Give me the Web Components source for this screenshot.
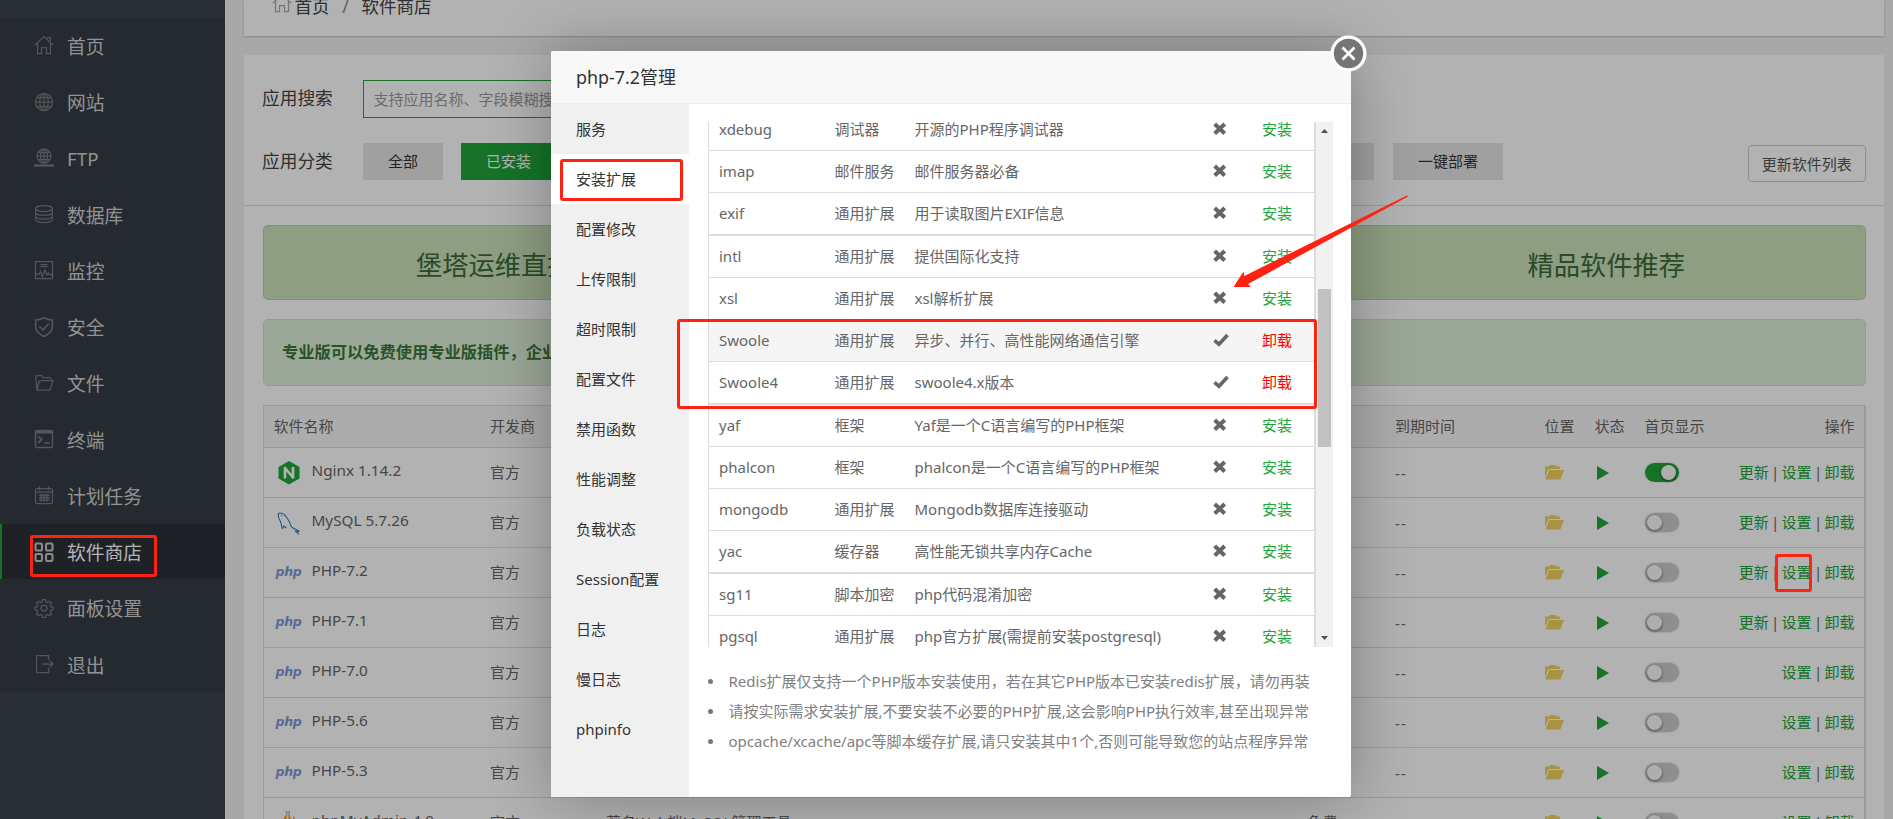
<!DOCTYPE html>
<html lang="zh-CN">
<head>
<meta charset="utf-8">
<title>软件商店</title>
<style>
    html, body {
        margin: 0;
        height: 100%;
        overflow: hidden;
    }

    body {
        font-family: "Noto Sans", "Noto Sans CJK SC", sans-serif;
        font-size: 15px;
        color: #666;
        background: #f1f1f1;
    }
</style>
</head>
<body>
<panel-app></panel-app>

<script>
const icons = {
    home: '<path d="M1 10 10 1.500l9 8.500M3.500 8.500v10h4v-6h5v6h4v-10M13 2.500h3.500V6"/>',
    globe: '<circle cx="10" cy="10" r="8.500"/><ellipse cx="10" cy="10" rx="4.200" ry="8.500"/><path d="M10 1.500v17M1.500 10h17M3 5.500h14M3 14.500h14"/>',
    ftp: '<circle cx="10" cy="8" r="7"/><ellipse cx="10" cy="8" rx="3.500" ry="7"/><path d="M10 1v14M3 8h14M4.500 4.500h11M4.500 11.500h11"/><path stroke-width="2.200" d="M0 17.500h20"/>',
    db: '<ellipse cx="10" cy="4.500" rx="8.300" ry="3"/><path d="M1.700 4.500v11c0 4 16.600 4 16.600 0v-11M1.700 8.200c0 4 16.600 4 16.600 0M1.700 12c0 4 16.600 4 16.600 0"/>',
    monitor: '<path d="M1.500 1.500h17v17h-17zM2 14h3l1.500-2.500 2 5L11 10l2 5 1.500-2 1 1.500h2.500M6.500 4.500h7M6.500 6.500h7"/>',
    shield: '<path stroke-width="1.700" d="M10 .8C7 2.500 4.500 3 1.700 3v7c0 4.500 4.300 7.500 8.300 9.500 4-2 8.300-5 8.300-9.500V3C15.500 3 13 2.500 10 .8zM5.500 9.500l3.500 3.500 5.500-6"/>',
    folder: '<path d="M3 17 1.700 4.500c0-1.500.8-2 2-2h4l1.500 2h7c1 0 1.300.6 1.300 2M3 17h13l3-9.500H6.500c-1 0-1.300.5-1.600 1.500z"/>',
    terminal: '<g stroke-width="1.500"><rect x="1.500" y="1.500" width="17" height="17" rx="1.500"/><path stroke-width="3" d="M2 3h16"/><path stroke-width="1.700" d="m4 7.500 4 3-4 3.500M10 14h6"/></g>',
    calendar: '<rect x="1.500" y="3.500" width="17" height="15" rx="2"/><path d="M5.500 1.500v4M14.500 1.500v4M2 7h16M5 10h11M5 12.500h11M5 15h11M7 9v7.500M10 9v7.500M13 9v7.500"/>',
    store: '<g stroke-width="2.100"><rect x="1.500" y="1.500" width="6.500" height="7" rx="1.500"/><rect x="12" y="1.500" width="6.500" height="7" rx="1.500"/><rect x="1.500" y="12" width="6.500" height="7" rx="1.500"/><rect x="12" y="12" width="6.500" height="7" rx="1.500"/></g>',
    gear: '<circle cx="10" cy="10" r="3"/><path d="M8.500 1.500h3l.5 2.300 1.500.7 2-1.300 2 2-1.200 2 .6 1.600 2.100.5v2.400l-2.200.6-.6 1.500 1.300 2-2 2-2-1.200-1.500.6-.5 2.300h-3L8 17.200l-1.600-.6-2 1.200-2-2 1.300-2-.7-1.500-2-.6V9.300L3 8.800l.7-1.600-1.300-2 2-2 2 1.300L8 3.800z"/>',
    exit: '<path d="M14.500 6V1.500h-12v17h12V14M8 10h11M15.500 6.500 19 10l-3.500 3.500"/>'
};

class LineIcon extends HTMLElement {

    connectedCallback() {
        this.attachShadow({mode: "open"}).innerHTML = `
        <style>
            :host {
                display: block;
                flex: none;
                width: 20px;
                height: 20px;
            }

            svg {
                display: block;
                width: 100%;
                height: 100%;
                fill: none;
                stroke: currentColor;
                stroke-width: 1.25;
            }
        </style>
        <svg viewBox="0 0 20 20">${icons[this.getAttribute("name")]}</svg>`;
    }
}

customElements.define("line-icon", LineIcon);

class MenuItem extends HTMLElement {

    connectedCallback() {
        this.attachShadow({mode: "open"}).innerHTML = `
        <style>
            :host {
                display: flex;
                align-items: center;
                box-sizing: border-box;
                height: 55px;
                margin-bottom: 1.250px;
                padding: 2.500px 0 0 32px;
                border-left: 2px solid #3a3e41;
                background: #363d45;
                color: #d2d2d2;
                font-size: 18.750px;
                line-height: 28px;
            }

            :host([active]) {
                border-color: #20a53a;
                background: #2c3138;
                color: #fff;
            }

            line-icon {
                margin: 0 13px 3px 0;
                color: #777a7d;
            }

            :host([active]) line-icon {
                color: #c4c4c4;
            }
        </style>
        <line-icon name="${this.getAttribute("icon")}"></line-icon>
        <slot></slot>`;
    }
}

customElements.define("menu-item", MenuItem);

class SideMenu extends HTMLElement {

    connectedCallback() {
        this.attachShadow({mode: "open"}).innerHTML = `
        <style>
            :host {
                display: block;
                flex: none;
                box-sizing: border-box;
                width: 225px;
                padding-top: 18px;
                background: #3d444e;
            }

            nav {
                background: #363d45;
            }
        </style>
        <nav>
            <menu-item icon="home">首页</menu-item>
            <menu-item icon="globe">网站</menu-item>
            <menu-item icon="ftp">FTP</menu-item>
            <menu-item icon="db">数据库</menu-item>
            <menu-item icon="monitor">监控</menu-item>
            <menu-item icon="shield">安全</menu-item>
            <menu-item icon="folder">文件</menu-item>
            <menu-item icon="terminal">终端</menu-item>
            <menu-item icon="calendar">计划任务</menu-item>
            <menu-item icon="store" active>软件商店</menu-item>
            <menu-item icon="gear">面板设置</menu-item>
            <menu-item icon="exit">退出</menu-item>
        </nav>`;
    }
}

customElements.define("side-menu", SideMenu);

class StoreFilter extends HTMLElement {

    connectedCallback() {
        this.attachShadow({mode: "open"}).innerHTML = `
        <style>
            :host {
                display: block;
                box-sizing: border-box;
                height: 151px;
                padding: 25px 18px 0 18px;
                border-bottom: 1px solid #ddd;
            }

            .row {
                display: flex;
                align-items: center;
                height: 38px;
                margin-bottom: 24.500px;
            }

            label {
                width: 101px;
                padding-bottom: 2px;
                color: #444;
                font-size: 17.700px;
                line-height: 26px;
            }

            .search {
                box-sizing: border-box;
                width: 320px;
                height: 38px;
                padding-left: 9.500px;
                border: 1px solid #20a53a;
                color: #999;
                line-height: 37px;
            }

            .tag {
                box-sizing: border-box;
                height: 37px;
                padding: 0 25px;
                margin-right: 18px;
                background: #e6e6e6;
                color: #333;
                line-height: 36px;
            }

            .on {
                background: #20a53a;
                color: #fff;
            }

            .last {
                width: 125px;
                margin: 0 19px 0 675px;
            }

            .update {
                box-sizing: border-box;
                width: 118.500px;
                height: 37px;
                margin: 4px 0 0 auto;
                border: 1px solid #ccc;
                border-radius: 4px;
                color: #555;
                line-height: 36px;
                text-align: center;
            }
        </style>
        <div class="row">
            <label>应用搜索</label>
            <div class="search">支持应用名称、字段模糊搜</div>
        </div>
        <div class="row">
            <label>应用分类</label>
            <div class="tag">全部</div>
            <div class="tag on">已安装</div>
            <div class="tag last"></div>
            <div class="tag">一键部署</div>
            <div class="update">更新软件列表</div>
        </div>`;
    }
}

customElements.define("store-filter", StoreFilter);

class SwitchButton extends HTMLElement {

    connectedCallback() {
        this.attachShadow({mode: "open"}).innerHTML = `
        <style>
            :host {
                display: flex;
                box-sizing: border-box;
                width: 34px;
                height: 19px;
                padding: 2px 2.500px;
                border-radius: 10px;
                background: #ccc;
                box-shadow: 0 0 1px 1px rgba(0, 0, 0, .08);
            }

            :host([on]) {
                justify-content: flex-end;
                background: #20a53a;
            }

            i {
                width: 15px;
                height: 15px;
                border-radius: 50%;
                background: #fafafa;
                box-shadow: 0 1px 2px 1px rgba(0, 0, 0, .28);
            }
        </style>
        <i></i>`;
    }
}

customElements.define("switch-button", SwitchButton);

const logos = {
    nginx: '<path fill="#20a53a" d="M12 0l10.500 6v11.500L12 23.500 1.500 17.500V6z"/><path fill="none" stroke="#fff" stroke-width="2.700" stroke-linecap="round" stroke-linejoin="round" d="M8 16.500V7l8 9.500V7"/>',
    mysql: '<path fill="none" stroke="#2a83b5" stroke-width="1.100" d="M3 9.500C1.500 7 1 4 1.800 2.200 5 1.500 7.500 3.500 9 5.500c2 3 4 5 5 9.500 1 2 3 2.500 5 3.500l3.500 2-4-.3 2 1.800 1.500 1M3 9.500c1.500 2 1 6 2.500 8l1.300-2.500 2.700 2M4 4.500l1 .4"/>',
    pma: '<path fill="#f0940e" d="M5 14c1-6 3-9 5-11l-1 11zM11 14l1-14 3 14zM16 14V5c2 3 4 5 5 9z"/><path stroke="#8aa" stroke-width="1" d="M8 1h5M9 3h3"/>'
};

class SoftTable extends HTMLElement {

    set rows(rows) {
        this._rows = rows;
        this.render();
    }

    logo(type) {
        if (type === "php") {
            return `<b class="php">php</b>`;
        }
        return `<svg class="logo" viewBox="0 0 24 24">${logos[type]}</svg>`;
    }

    render() {
        const root = this.shadowRoot || this.attachShadow({mode: "open"});
        root.innerHTML = `
        <style>
            :host {
                display: block;
                border: 1px solid #ddd;
                border-right-width: 2px;
                line-height: 22px;
            }

            .tr {
                display: grid;
                grid-template-columns: 216.500px 116px 701.500px 87.500px 149.500px 50px 50px 1fr;
                align-items: center;
                box-sizing: border-box;
                height: 50px;
                padding: 0 9.500px 0 9.500px;
                border-bottom: 1px solid #ddd;
            }

            .tr.th {
                height: 42px;
                padding-bottom: 2px;
                background: #f7f7f7;
            }

            .txt {
                padding-bottom: 2px;
            }

            .dash {
                letter-spacing: 1.200px;
            }

            .name {
                display: flex;
                align-items: center;
                height: 48px;
                font-size: 15.300px;
            }

            .name span {
                margin-bottom: 5px;
            }

            .logo {
                width: 24px;
                height: 24px;
                margin: 0 11px 0 3px;
            }

            .php {
                width: 27px;
                margin: 0 9px 1px 2px;
                color: #8099d8;
                font: italic bold 12.500px/22px "DejaVu Sans", sans-serif;
                letter-spacing: -.3px;
            }

            .cell {
                display: flex;
                align-items: center;
                justify-content: space-between;
            }

            .act {
                padding-bottom: 2px;
                word-spacing: -1.600px;
            }

            a {
                color: #20a53a;
            }

            .dir {
                width: 19px;
                height: 15px;
            }

            .run {
                width: 12px;
                height: 14px;
                margin-left: 2px;
            }

            svg {
                display: block;
            }
        </style>
        <div class="tr th">
            <div>软件名称</div><div>开发商</div><div></div><div></div>
            <div>到期时间</div><div>位置</div><div>状态</div>
            <div class="cell"><span>首页显示</span><span>操作</span></div>
        </div>
        ${this._rows.map(row => `
        <div class="tr">
            <div class="name">${this.logo(row.logo)}<span>${row.name}</span></div>
            <div class="txt">官方</div>
            <div class="txt">${row.info || ""}</div>
            <div class="txt">${row.price || ""}</div>
            <div class="dash">--</div>
            <svg class="dir" viewBox="0 0 19 15"><path fill="#efd35c" d="M0 12V1.500h4L5 0h5.500l.8 1.500H15V4H3.500zM4.200 5H19l-3.700 9.500H.5z"/></svg>
            <svg class="run" viewBox="0 0 12 14"><path fill="#20a53a" d="M0 0l12 7-12 7z"/></svg>
            <div class="cell">
                <switch-button ${row.home ? "on" : ""}></switch-button>
                <div class="act">${row.update ? "<a>更新</a> | " : ""}<a>设置</a> | <a>卸载</a></div>
            </div>
        </div>`).join("")}`;
    }
}

customElements.define("soft-table", SoftTable);

class StorePage extends HTMLElement {

    connectedCallback() {
        this.attachShadow({mode: "open"}).innerHTML = `
        <style>
            :host {
                display: block;
                flex: 1;
                padding: 0 9px 0 19px;
            }

            .crumb {
                display: flex;
                align-items: flex-start;
                box-sizing: border-box;
                height: 36px;
                padding-left: 28px;
                background: #fff;
                box-shadow: 0 1px 2px rgba(0, 0, 0, .2);
                color: #444;
                font-size: 17.500px;
                line-height: 26px;
            }

            .crumb > * {
                margin-top: -7px;
            }

            .crumb line-icon {
                color: #aaa;
                margin-right: 2.500px;
            }

            .crumb i {
                margin: -7px 12.800px 0;
                color: #888;
                font-style: normal;
            }

            .card {
                height: 800px;
                margin-top: 19px;
                background: #fff;
            }

            .list {
                padding: 19px 18px 0 19px;
            }

            .banner {
                display: flex;
                align-items: center;
                justify-content: space-between;
                box-sizing: border-box;
                height: 75px;
                padding: 2px 180px 0 152px;
                border: 1px solid #b9d3ab;
                border-radius: 5px;
                background: #cae2bb;
                color: #3c6b3a;
                font-size: 26.250px;
            }

            .tip {
                box-sizing: border-box;
                height: 67px;
                margin: 19px 0;
                padding: 0 18px;
                border: 1px solid #cfe4c1;
                border-radius: 5px;
                background: #dff0d8;
                color: #3c763d;
                font-size: 16.250px;
                font-weight: bold;
                line-height: 65px;
            }
        </style>
        <div class="crumb"><line-icon name="home"></line-icon><span>首页</span><i>/</i><span>软件商店</span></div>
        <div class="card">
            <store-filter></store-filter>
            <div class="list">
                <div class="banner"><span>堡塔运维直播</span><span>精品软件推荐</span></div>
                <div class="tip">专业版可以免费使用专业版插件，企业</div>
                <soft-table></soft-table>
            </div>
        </div>`;
        this.shadowRoot.querySelector("soft-table").rows = [
            {logo: "nginx", name: "Nginx 1.14.2", home: true, update: true},
            {logo: "mysql", name: "MySQL 5.7.26", update: true},
            {logo: "php", name: "PHP-7.2", update: true},
            {logo: "php", name: "PHP-7.1", update: true},
            {logo: "php", name: "PHP-7.0"},
            {logo: "php", name: "PHP-5.6"},
            {logo: "php", name: "PHP-5.3"},
            {logo: "pma", name: "phpMyAdmin 4.0", info: "著名Web端MySQL管理工具", price: "免费"}
        ];
    }
}

customElements.define("store-page", StorePage);

class LayerDialog extends HTMLElement {

    connectedCallback() {
        this.attachShadow({mode: "open"}).innerHTML = `
        <style>
            :host {
                position: absolute;
                left: 551px;
                top: 51px;
                display: grid;
                grid-template: 53px 1fr / 138px 1fr;
                width: 800px;
                height: 746px;
                border-radius: 2px;
                background: #fff;
                box-shadow: 1px 1px 62px rgba(0, 0, 0, .3);
            }

            header {
                grid-column: 1 / 3;
                padding-left: 25px;
                border-bottom: 1px solid #eee;
                border-radius: 2px 2px 0 0;
                background: #f8f8f8;
                color: #333;
                font-size: 17.900px;
                line-height: 52px;
            }

            nav {
                background: #f0f0f0;
            }

            nav div {
                height: 50px;
                padding-left: 25px;
                color: #333;
                line-height: 50px;
            }

            nav div.on {
                background: #fff;
            }

            .close {
                position: absolute;
                right: -16px;
                top: -16px;
                width: 37px;
                height: 37px;
            }
        </style>
        <header>${this.getAttribute("title")}</header>
        <nav>${this.getAttribute("tabs").split(",").map((tab, i) => `
            <div class="${i === 1 ? "on" : ""}">${tab}</div>`).join("")}
        </nav>
        <slot></slot>
        <svg class="close" viewBox="0 0 37 37">
            <circle cx="18.500" cy="18.500" r="18" fill="#fff"/>
            <circle cx="18.500" cy="18.500" r="14.700" fill="#757575"/>
            <path d="M12.500 12.500l12 12M24.500 12.500l-12 12" stroke="#fff" stroke-width="2.800"/>
        </svg>`;
    }
}

customElements.define("layer-dialog", LayerDialog);

class ExtensionList extends HTMLElement {

    set items(items) {
        this._items = items;
        this.render();
    }

    render() {
        const root = this.shadowRoot || this.attachShadow({mode: "open"});
        const cross = '<svg viewBox="0 0 14 14"><path stroke="#666" stroke-width="4" d="M1.700 2l10 9.500M11.700 2l-10 9.500"/></svg>';
        const check = '<svg viewBox="0 0 16 14"><path fill="none" stroke="#666" stroke-width="3.600" d="M1.500 7.300l4.500 4L14.500 2"/></svg>';
        root.innerHTML = `
        <style>
            :host {
                display: block;
                padding: 18px 18px 0 19px;
            }

            .scroll {
                display: flex;
                height: 525px;
                overflow: hidden;
            }

            .table {
                flex: 1;
                height: 560px;
                margin-top: -13px;
                border-left: 1px solid #ddd;
                border-right: 2px solid #ddd;
            }

            .tr {
                display: grid;
                grid-template-columns: 115.500px 80px 298.500px 1fr auto;
                align-items: center;
                box-sizing: border-box;
                height: 42px;
                padding: 0 22px 0 10px;
                border-bottom: 1px solid #ddd;
                line-height: 22px;
            }

            .tr div {
                padding-bottom: 2px;
            }

            .tr.thick {
                height: 43px;
                border-bottom-width: 2px;
            }

            .tr.hover {
                background: #f5f5f5;
            }

            .tr svg {
                height: 14px;
                margin-bottom: 2px;
            }

            .tr svg.ok {
                margin-bottom: 0;
            }

            .add {
                color: #20a53a;
            }

            .del {
                color: #f00;
            }

            .bar {
                display: flex;
                flex-direction: column;
                align-items: center;
                width: 17px;
                background: #f1f1f1;
            }

            .bar i {
                width: 13px;
                height: 158px;
                margin: 150px 0 auto;
                background: #c1c1c1;
            }

            .bar svg {
                width: 17px;
                height: 17px;
                fill: #505050;
            }

            ul {
                margin: 19px 0 0;
                padding: 0;
                color: #808080;
                line-height: 30px;
                list-style: none;
                white-space: nowrap;
            }

            li {
                display: flex;
                align-items: center;
            }

            li::before {
                content: "";
                width: 5px;
                height: 5px;
                margin: 1px 15.500px 0 0;
                border-radius: 50%;
                background: #777;
            }
        </style>
        <div class="scroll">
            <div class="table">${this._items.map(([name, type, info, flag]) => `
                <div class="tr ${flag || ""}">
                    <div>${name}</div><div>${type}</div><div>${info}</div>
                    ${/^Swoole/.test(name) ? `${check}<div class="del">卸载</div>` : `${cross}<div class="add">安装</div>`}
                </div>`).join("")}
            </div>
            <div class="bar">
                <svg viewBox="0 0 17 17"><path d="M5 11l3.500-4L12 11z"/></svg>
                <i></i>
                <svg viewBox="0 0 17 17"><path d="M5 6l3.500 4L12 6z"/></svg>
            </div>
        </div>
        <ul>
            <li>Redis扩展仅支持一个PHP版本安装使用，若在其它PHP版本已安装redis扩展，请勿再装</li>
            <li>请按实际需求安装扩展,不要安装不必要的PHP扩展,这会影响PHP执行效率,甚至出现异常</li>
            <li>opcache/xcache/apc等脚本缓存扩展,请只安装其中1个,否则可能导致您的站点程序异常</li>
        </ul>`;
    }
}

customElements.define("extension-list", ExtensionList);

// red frames and the arrow drawn over the page
class MarkLayer extends HTMLElement {

    connectedCallback() {
        this.attachShadow({mode: "open"}).innerHTML = `
        <style>
            :host {
                position: absolute;
                inset: 0;
            }

            svg {
                display: block;
                width: 1893px;
                height: 819px;
            }
        </style>
        <svg viewBox="0 0 1893 819">
            <g fill="none" stroke="#ff2212" stroke-width="3">
                <rect x="31.500" y="536.500" width="124" height="39" rx="1.500"/>
                <rect x="561.500" y="160.500" width="120" height="39" rx="1.500"/>
                <rect x="678.500" y="320.500" width="637" height="87" rx="1.500"/>
                <rect x="1776.500" y="555.500" width="34" height="35" rx="1.500"/>
            </g>
            <path fill="#ff2212" d="M1233.500 287l10-15.500.8 4.500L1407 195.500l1 1L1248 284l3 3z"/>
        </svg>`;
    }
}

customElements.define("mark-layer", MarkLayer);

class PanelApp extends HTMLElement {

    connectedCallback() {
        this.attachShadow({mode: "open"}).innerHTML = `
        <style>
            :host {
                position: relative;
                display: flex;
                height: 819px;
                overflow: hidden;
            }

            .shade {
                position: absolute;
                inset: 0;
                background: rgba(0, 0, 0, .3);
            }
        </style>
        <side-menu></side-menu>
        <store-page></store-page>
        <div class="shade"></div>
        <layer-dialog title="php-7.2管理" tabs="服务,安装扩展,配置修改,上传限制,超时限制,配置文件,禁用函数,性能调整,负载状态,Session配置,日志,慢日志,phpinfo">
            <extension-list></extension-list>
        </layer-dialog>
        <mark-layer></mark-layer>`;
        this.shadowRoot.querySelector("extension-list").items = [
            ["xdebug", "调试器", "开源的PHP程序调试器"],
            ["imap", "邮件服务", "邮件服务器必备"],
            ["exif", "通用扩展", "用于读取图片EXIF信息", "thick"],
            ["intl", "通用扩展", "提供国际化支持"],
            ["xsl", "通用扩展", "xsl解析扩展"],
            ["Swoole", "通用扩展", "异步、并行、高性能网络通信引擎", "hover"],
            ["Swoole4", "通用扩展", "swoole4.x版本", "thick"],
            ["yaf", "框架", "Yaf是一个C语言编写的PHP框架"],
            ["phalcon", "框架", "phalcon是一个C语言编写的PHP框架"],
            ["mongodb", "通用扩展", "Mongodb数据库连接驱动"],
            ["yac", "缓存器", "高性能无锁共享内存Cache", "thick"],
            ["sg11", "脚本加密", "php代码混淆加密"],
            ["pgsql", "通用扩展", "php官方扩展(需提前安装postgresql)"]
        ];
    }
}

customElements.define("panel-app", PanelApp);
</script>
</body>
</html>
